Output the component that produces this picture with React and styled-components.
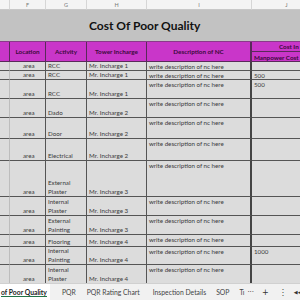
import React from "react";
import styled, { createGlobalStyle } from "styled-components";

const Global = createGlobalStyle`
  html, body { margin: 0; padding: 0; background: #ffffff; }
  body { width: 300px; height: 300px; overflow: hidden; font-family: "Lato", "Open Sans", sans-serif; }
`;

const COLS = "10px 36px 41px 60px 105px 70px";

const Page = styled.div`
  width: 300px;
  height: 300px;
  overflow: hidden;
  display: flex;
  flex-direction: column;
  background: #dcdcdc;
`;

const Sheet = styled.div`
  flex: 1;
  overflow: hidden;
  display: grid;
  grid-template-columns: ${COLS};
  grid-auto-rows: auto;
  width: 322px;
`;

const ColLetter = styled.div`
  height: 10px;
  background: #f4f4f4;
  border-right: 1px solid #d6d6d6;
  border-bottom: 1px solid #c8c8c8;
  box-sizing: border-box;
  color: #777;
  font-size: 5.5px;
  display: flex;
  align-items: center;
  justify-content: center;
`;

const Title = styled.div`
  grid-column: 1 / -1;
  height: 32px;
  background: #c2c2c2;
  display: flex;
  align-items: center;
  padding-left: 89px;
  font-family: "Lato", sans-serif;
  font-weight: 700;
  font-size: 12px;
  color: #111;
  box-sizing: border-box;
  border-bottom: 1px solid #8a3a8a;
`;

const Head = styled.div`
  background: #c936c9;
  height: 20px;
  box-sizing: border-box;
  border-right: ${(p) => (p.$thick ? "2px" : "1px")} solid #5a2a5a;
  border-bottom: 1px solid #5a2a5a;
  display: flex;
  align-items: center;
  justify-content: center;
  font-weight: 700;
  font-size: 6.3px;
  color: #3a0a3a;
  white-space: nowrap;
`;

const HeadSplit = styled.div`
  background: #c936c9;
  height: 20px;
  display: grid;
  grid-template-rows: 10px 10px;
  box-sizing: border-box;
  border-bottom: 1px solid #5a2a5a;
`;

const HeadPart = styled.div`
  display: flex;
  align-items: center;
  font-weight: 700;
  font-size: 6.3px;
  color: #3a0a3a;
  white-space: nowrap;
  padding-left: ${(p) => p.$pad}px;
  box-sizing: border-box;
  border-bottom: ${(p) => (p.$line ? "1px solid #5a2a5a" : "none")};
`;

const Cell = styled.div`
  height: ${(p) => p.$h}px;
  box-sizing: border-box;
  border-bottom: 1px solid #555;
  border-right: ${(p) => (p.$thick ? "2px solid #444" : p.$light ? "1px solid #bdbdbd" : "1px solid #555")};
  display: flex;
  flex-direction: column;
  justify-content: ${(p) => (p.$top ? "flex-start" : "flex-end")};
  align-items: stretch;
  padding: 0 2px 0 ${(p) => (p.$indent ? p.$indent : 2)}px;
  font-size: 6.2px;
  line-height: 9px;
  color: #3a3a3a;
  overflow: hidden;
  white-space: nowrap;
`;

const Line = styled.span`
  display: block;
`;

const Tabs = styled.div`
  height: 16px;
  flex: none;
  background: #f1f1f1;
  border-top: 1px solid #d0d0d0;
  display: flex;
  align-items: center;
  font-size: 6.8px;
  color: #444;
  white-space: nowrap;
  overflow: hidden;
`;

const Tab = styled.div`
  height: 100%;
  flex: none;
  display: flex;
  align-items: center;
  box-sizing: border-box;
  margin-left: ${(p) => p.$ml}px;
  padding: 0 ${(p) => (p.$active ? "3px 0 1px" : "0")};
  background: ${(p) => (p.$active ? "#ffffff" : "transparent")};
  color: ${(p) => (p.$active ? "#1d1d1d" : "#444")};
`;

const Underline = styled.span`
  border-bottom: 1.5px solid #217346;
  font-weight: 700;
`;

const Ctrl = styled.div`
  flex: none;
  color: #333;
  font-family: "DejaVu Sans", sans-serif;
  font-size: ${(p) => p.$size || 7}px;
  margin-left: ${(p) => p.$ml}px;
`;

const rows = [
  ["RCC", "Mr. Incharge 1", "", 9],
  ["RCC", "Mr. Incharge 1", "500", 9],
  ["RCC", "Mr. Incharge 1", "500", 19],
  ["Dado", "Mr. Incharge 2", "", 19],
  ["Door", "Mr. Incharge 2", "", 21],
  ["Electrical", "Mr. Incharge 2", "", 22],
  [["External", "Plaster"], "Mr. Incharge 3", "", 36],
  [["Internal", "Plaster"], "Mr. Incharge 3", "", 19],
  [["External", "Painting"], "Mr. Incharge 3", "", 19],
  ["Flooring", "Mr. Incharge 4", "", 12],
  [["Internal", "Painting"], "Mr. Incharge 4", "1000", 18],
  [["Internal", "Plaster"], "Mr. Incharge 4", "", 19],
];

export default function App() {
  return (
    <>
      <Global />
      <Page>
        <Sheet>
          {["", "F", "G", "H", "I", "J"].map((l, i) => (
            <ColLetter key={i}>{l}</ColLetter>
          ))}
          <Title>Cost Of Poor Quality</Title>
          <Head />
          <Head>Location</Head>
          <Head>Activity</Head>
          <Head>Tower Incharge</Head>
          <Head $thick>Description of NC</Head>
          <HeadSplit>
            <HeadPart $pad={27} $line>Cost In</HeadPart>
            <HeadPart $pad={2}>Manpower Cost</HeadPart>
          </HeadSplit>
          {rows.map(([act, inc, val, h], i) => (
            <React.Fragment key={i}>
              <Cell $h={h} $light />
              <Cell $h={h} $indent={13}>
                <Line>area</Line>
              </Cell>
              <Cell $h={h}>
                {(Array.isArray(act) ? act : [act]).map((a) => (
                  <Line key={a}>{a}</Line>
                ))}
              </Cell>
              <Cell $h={h}>
                <Line>{inc}</Line>
              </Cell>
              <Cell $h={h} $top $thick>
                <Line>write description of nc here</Line>
              </Cell>
              <Cell $h={h} $top>
                <Line>{val}</Line>
              </Cell>
            </React.Fragment>
          ))}
        </Sheet>
        <Tabs>
          <Tab $active $ml={0}>
            <Underline>of Poor Quality</Underline>
          </Tab>
          <Tab $ml={12}>PQR</Tab>
          <Tab $ml={11}>PQR Rating Chart</Tab>
          <Tab $ml={13}>Inspection Details</Tab>
          <Tab $ml={10}>SOP</Tab>
          <Tab $ml={10}>Tı</Tab>
          <Ctrl $ml={3}>···</Ctrl>
          <Ctrl $ml={8} $size={8}>+</Ctrl>
          <Ctrl $ml={10} $size={8}>⋮</Ctrl>
          <Ctrl $ml={7} $size={5}>◀◀</Ctrl>
        </Tabs>
      </Page>
    </>
  );
}
